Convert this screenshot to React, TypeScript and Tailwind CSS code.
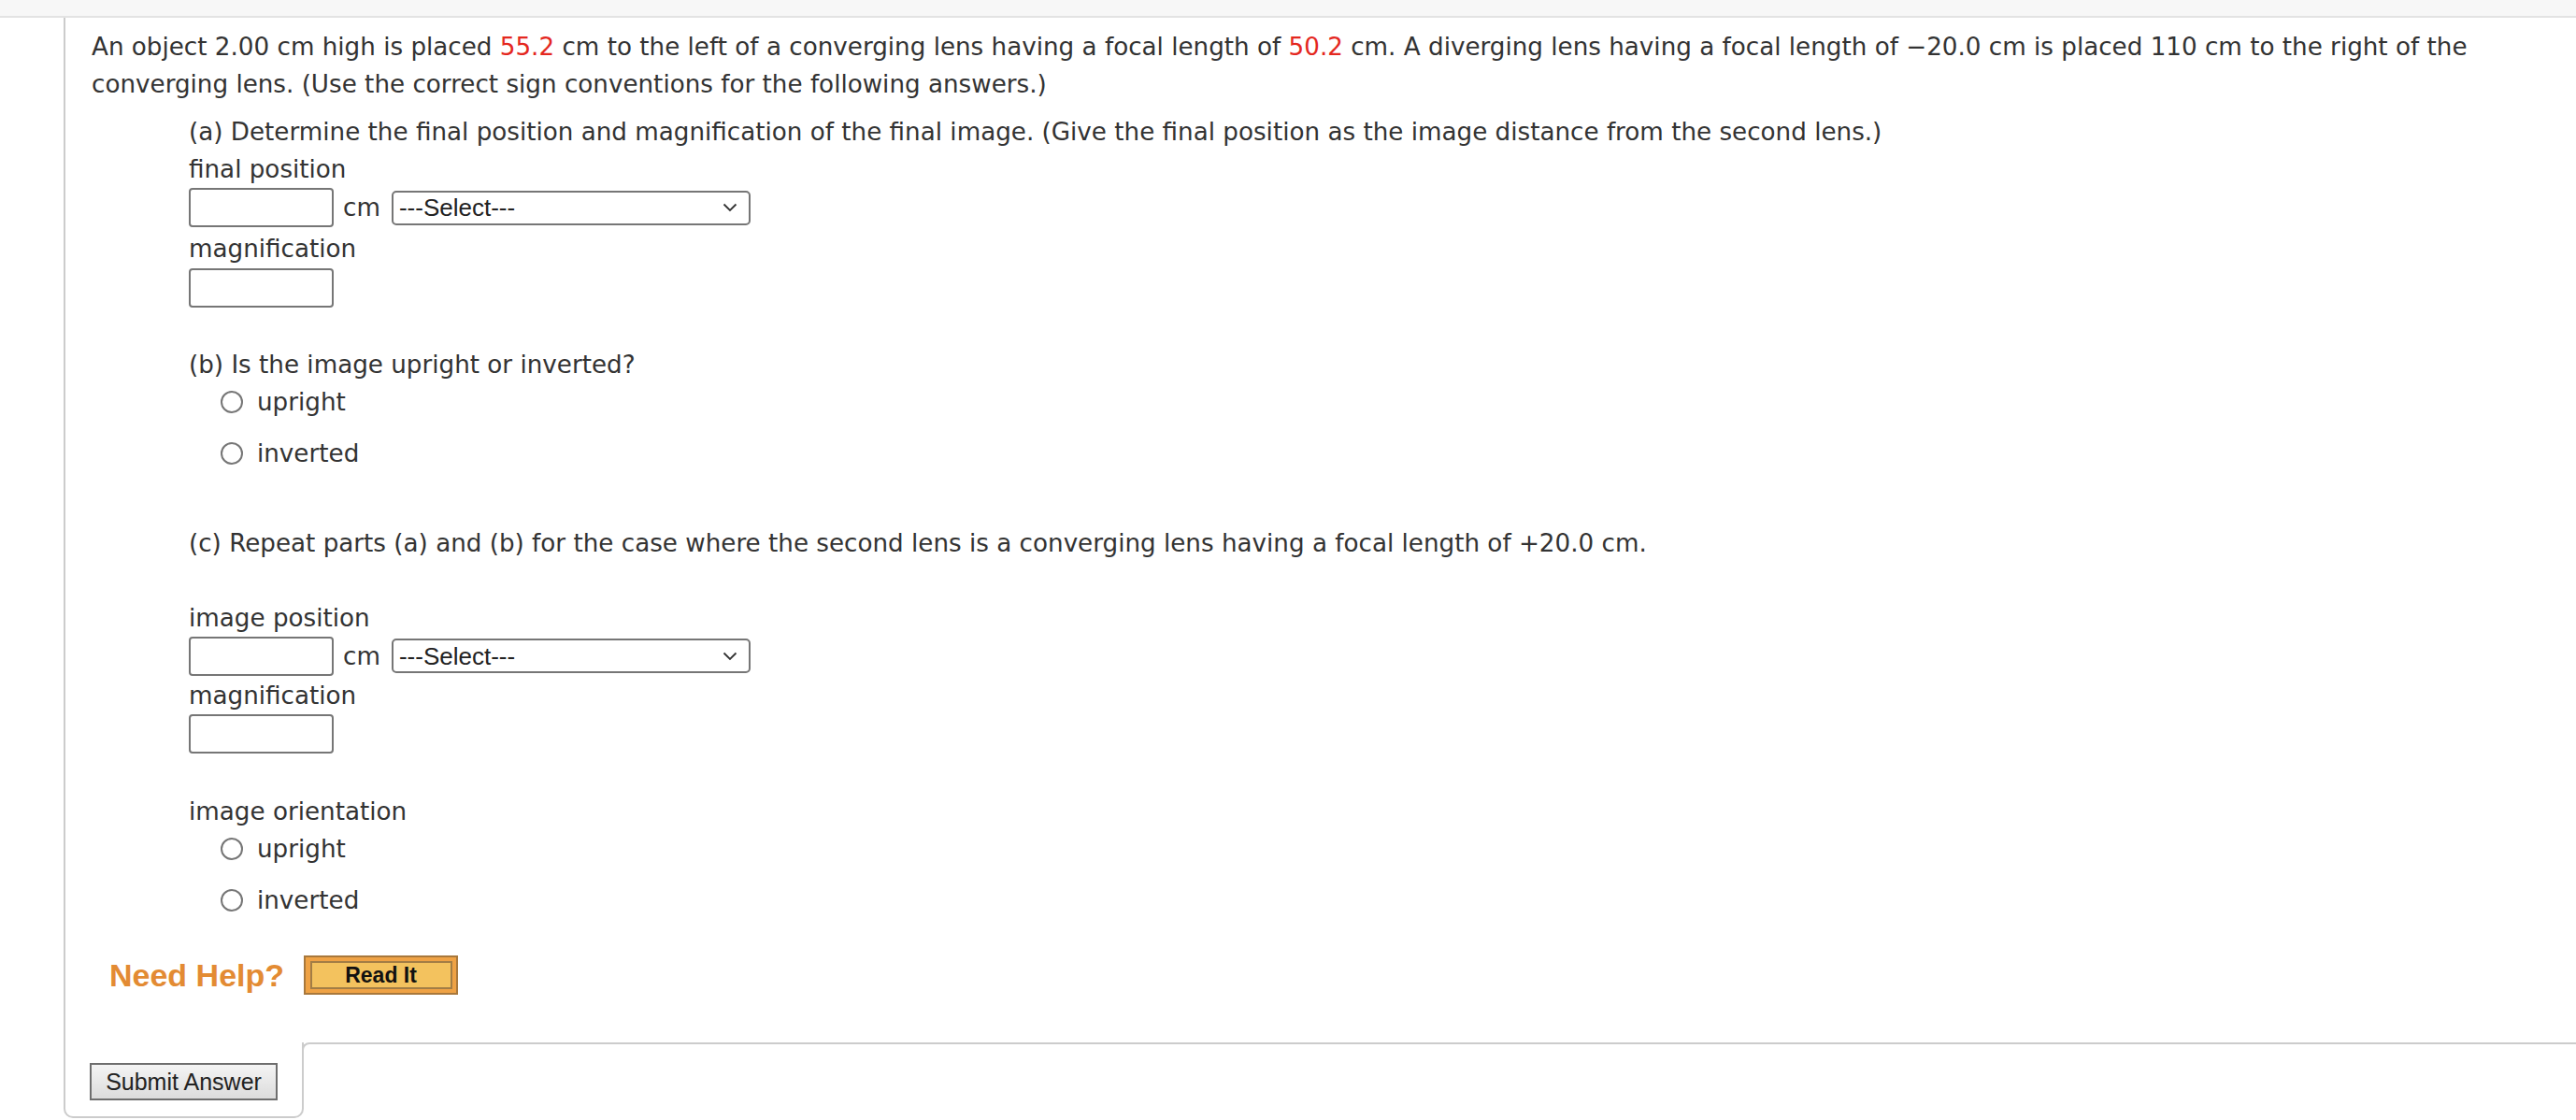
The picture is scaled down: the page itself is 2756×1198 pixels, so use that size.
import React from "react";

const F = { fontFamily: '"DejaVu Sans", Verdana, sans-serif' };
const A = { fontFamily: '"Liberation Sans", Arial, sans-serif' };

function TextBox() {
  return <span className="inline-block w-[155px] h-[42px] border-2 border-[#767676] rounded-[4px] bg-white align-middle" />;
}

function SelectBox() {
  return (
    <span className="inline-flex w-[384px] h-[37px] items-center justify-between border-2 border-[#767676] rounded-[5px] bg-white pl-[6px] pr-[12px] align-middle">
      <span className="text-[26px] leading-none text-[#222]" style={A}>---Select---</span>
      <svg width="16" height="10" viewBox="0 0 16 10" fill="none">
        <path d="M1.5 1.5 L8 8 L14.5 1.5" stroke="#333" strokeWidth="1.8" />
      </svg>
    </span>
  );
}

function Radio({ label }: { label: string }) {
  return (
    <div className="flex items-center h-[40px] pl-[34px]">
      <span className="inline-block w-[24px] h-[24px] rounded-full border-2 border-[#767676] bg-white" />
      <span className="ml-[15px]">{label}</span>
    </div>
  );
}

function PosRow() {
  return (
    <div className="flex items-center h-[42px]">
      <TextBox />
      <span className="ml-[10px] mr-[12px]">cm</span>
      <SelectBox />
    </div>
  );
}

export default function App() {
  return (
    <div className="w-[2756px] min-h-[1198px] bg-white text-[#333] text-[26.2px] leading-[40px]" style={F}>
      <div className="h-[19px] bg-[#f7f7f7] border-b-2 border-[#e3e3e3]" />
      <div className="ml-[68px]">
        <div className="border-l-2 border-[#cccccc] pl-[28px] pt-[11px] h-[1096px]">
          <div className="whitespace-nowrap">
            An object 2.00 cm high is placed <span className="text-[#e4281f]">55.2</span> cm to the left of a converging lens having a focal length of <span className="text-[#e4281f]">50.2</span> cm. A diverging lens having a focal length of −20.0 cm is placed 110 cm to the right of the
          </div>
          <div className="whitespace-nowrap">converging lens. (Use the correct sign conventions for the following answers.)</div>

          <div className="pl-[104px] mt-[11px]">
            <div className="whitespace-nowrap">(a) Determine the final position and magnification of the final image. (Give the final position as the image distance from the second lens.)</div>
            <div>final position</div>
            <PosRow />
            <div className="mt-[3px]">magnification</div>
            <TextBox />

            <div className="mt-[41px]">(b) Is the image upright or inverted?</div>
            <Radio label="upright" />
            <div className="mt-[15px]"><Radio label="inverted" /></div>

            <div className="mt-[56px] whitespace-nowrap">(c) Repeat parts (a) and (b) for the case where the second lens is a converging lens having a focal length of +20.0 cm.</div>
            <div className="mt-[40px]">image position</div>
            <PosRow />
            <div className="mt-[1px]">magnification</div>
            <TextBox />

            <div className="mt-[42px]">image orientation</div>
            <Radio label="upright" />
            <div className="mt-[15px]"><Radio label="inverted" /></div>
          </div>

          <div className="flex items-center mt-[39px] pl-[19px]">
            <span className="text-[34px] leading-[42px] font-bold text-[#e38b33]" style={A}>Need Help?</span>
            <span className="ml-[21px] w-[165px] h-[42px] border-2 border-[#a8783c] bg-[#efa245] flex items-center justify-center">
              <span className="w-[152px] h-[30px] border-2 border-[#a27d45] bg-[#f3c25e] flex items-center justify-center text-[23px] font-bold text-[#111]" style={A}>Read It</span>
            </span>
          </div>
        </div>
        <div className="flex">
          <div className="w-[257px] h-[81px] border-l-2 border-r-2 border-b-2 border-[#cccccc] rounded-b-[10px] pt-[22px] pl-[26px]">
            <span className="flex w-[201px] h-[40px] items-center justify-center border-2 border-[#6e6e6e] bg-gradient-to-b from-[#f4f4f4] to-[#dcdcdc] text-[25px] text-[#222]" style={A}>Submit Answer</span>
          </div>
          <div className="flex-1 -ml-[2px] h-[20px] border-t-2 border-l-2 border-[#cccccc] rounded-tl-[8px]" />
        </div>
      </div>
    </div>
  );
}
